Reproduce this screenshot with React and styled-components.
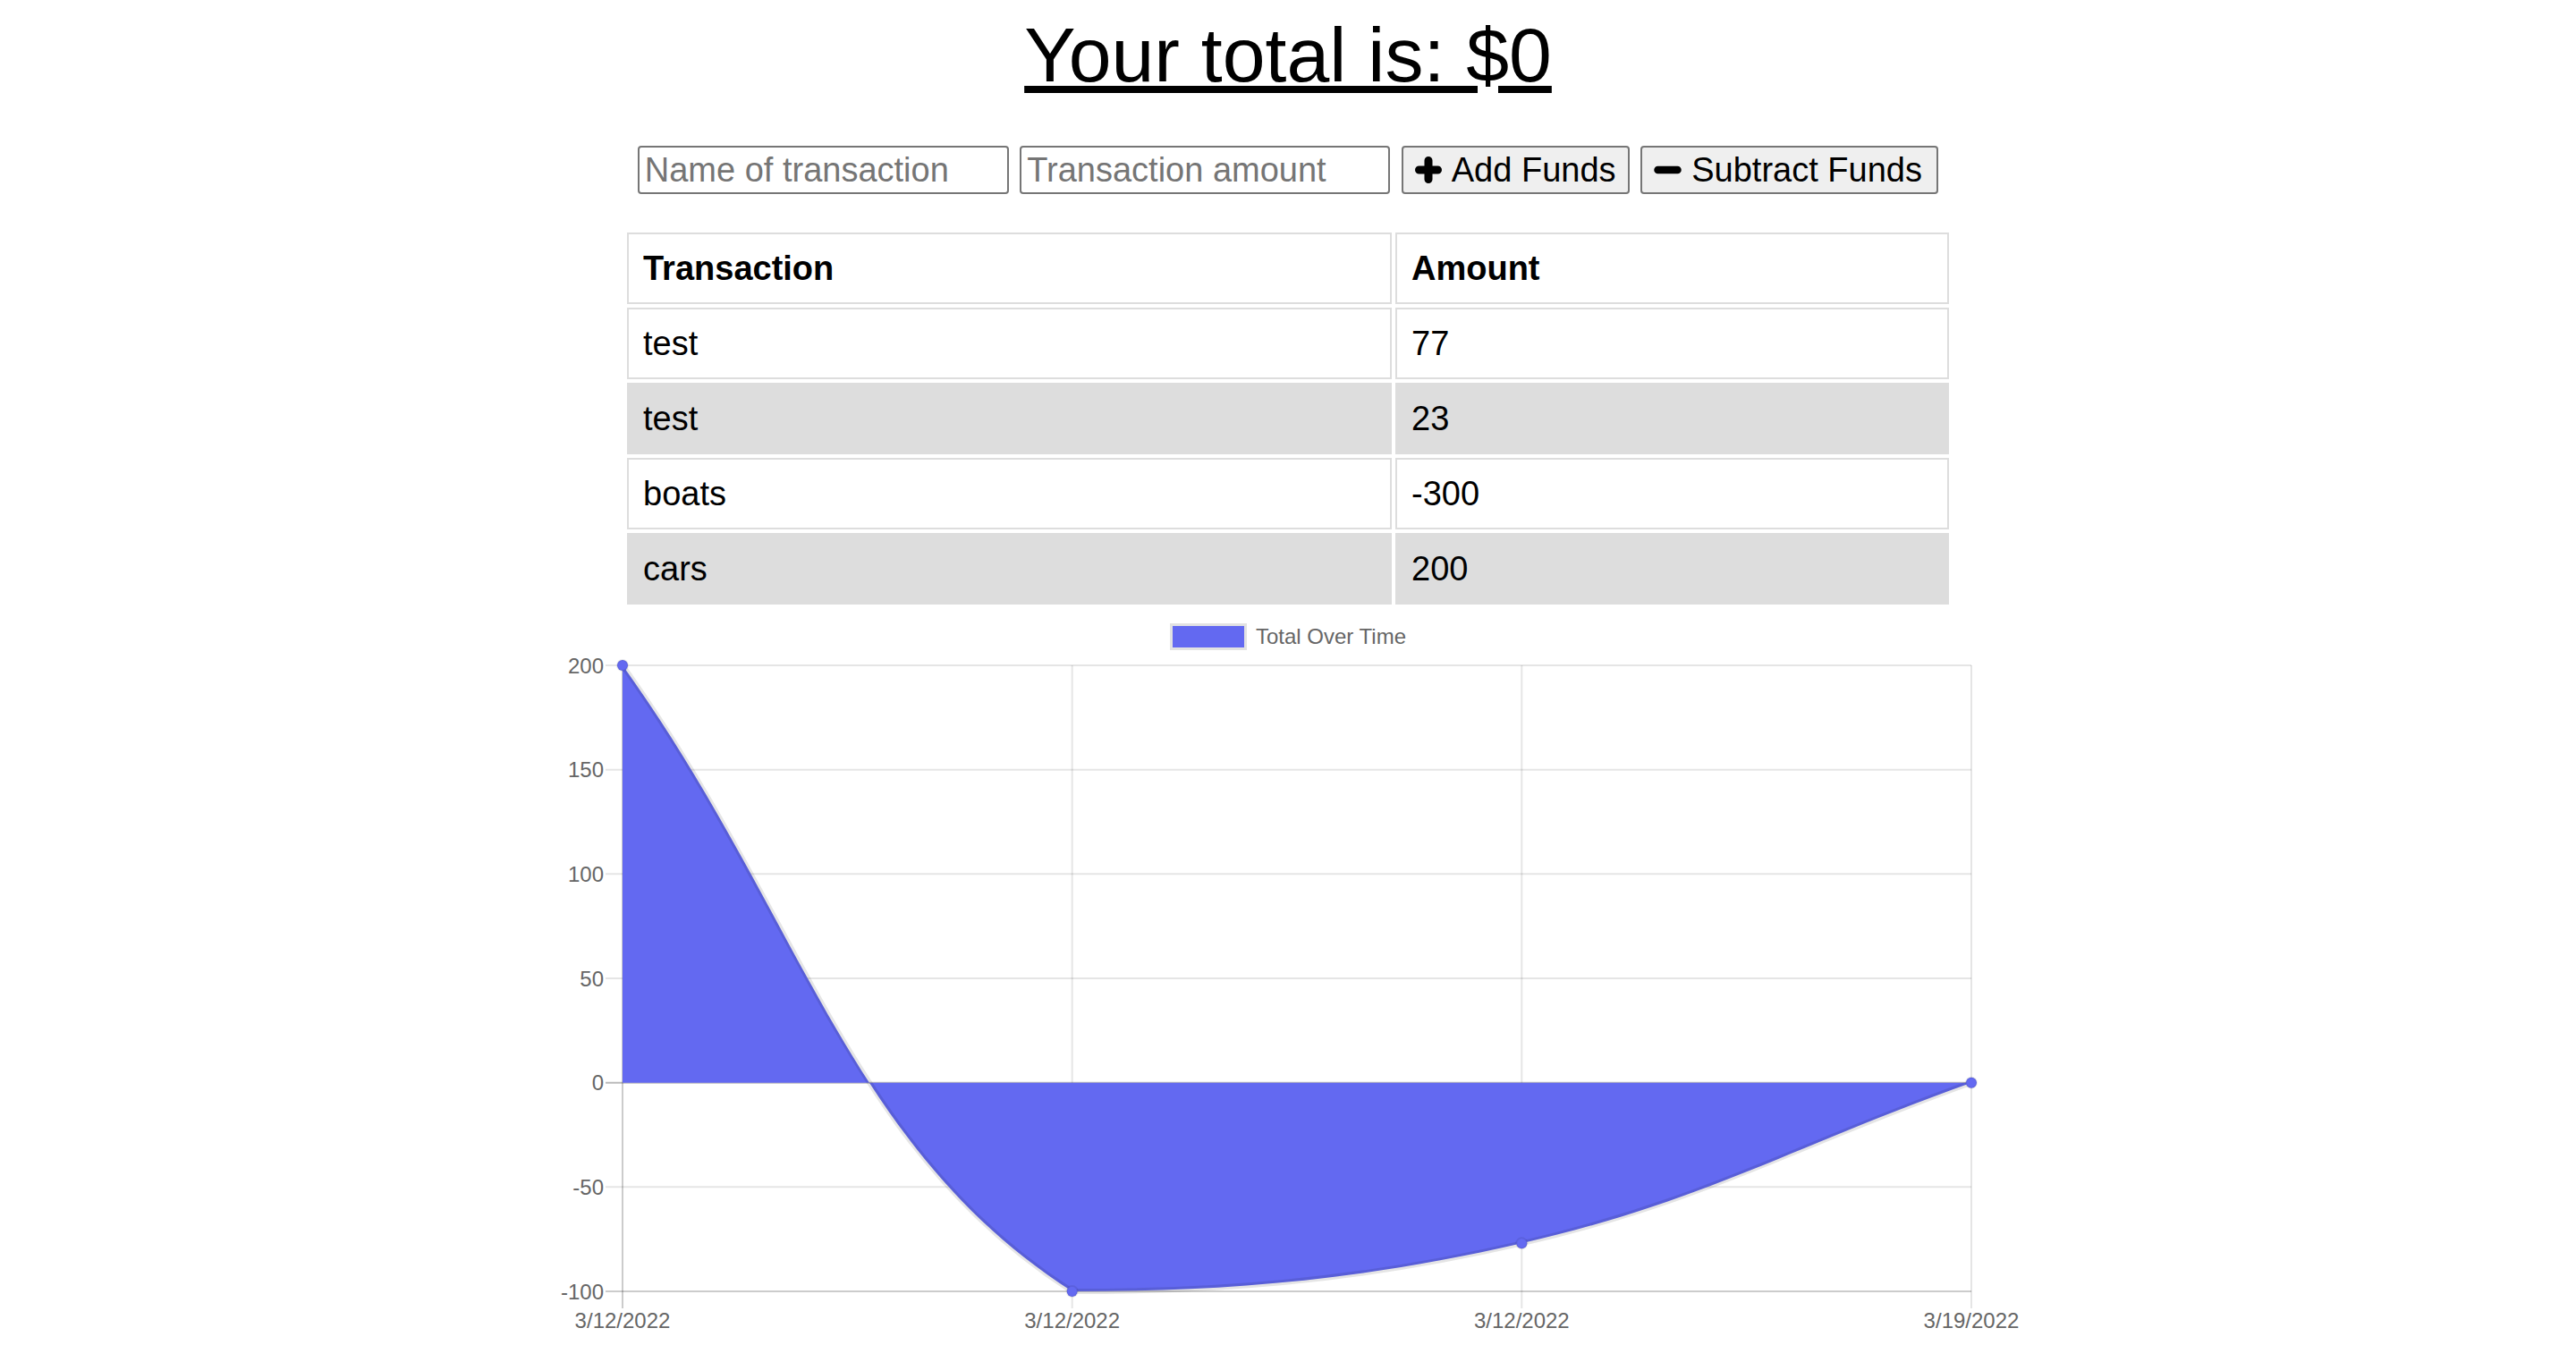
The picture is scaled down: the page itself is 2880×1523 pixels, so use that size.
import React from 'react';
import styled, { createGlobalStyle } from 'styled-components';

//전역 스타일
const GlobalStyle = createGlobalStyle`
  body {
    margin: 0;
    background: #ffffff;
    font-family: "Liberation Sans", Arial, Helvetica, sans-serif;
    color: #000000;
  }
`;

const Page = styled.main`
  display: flex;
  flex-direction: column;
  align-items: center;
`;

const Title = styled.h1`
  margin: 12px 0 0;
  font-size: 86px;
  line-height: 99px;
  font-weight: 400;
  text-decoration: underline;
`;

const Form = styled.div`
  display: flex;
  align-items: center;
  gap: 12.5px;
  margin-top: 52px;
  height: 54px;
`;

const Input = styled.input`
  box-sizing: border-box;
  width: ${({ $width }) => $width}px;
  height: 54px;
  padding: 0 6px;
  border: 2px solid #767676;
  border-radius: 4px;
  background: #ffffff;
  font-family: inherit;
  font-size: 38px;
  color: #000000;
  outline: none;

  &::placeholder {
    color: #757575;
  }
`;

const Button = styled.button`
  box-sizing: border-box;
  display: inline-flex;
  align-items: center;
  gap: ${({ $gap }) => $gap}px;
  width: ${({ $width }) => $width}px;
  height: 54px;
  padding: 0 13px;
  border: 2px solid #767676;
  border-radius: 4px;
  background: #efefef;
  font-family: inherit;
  font-size: 38px;
  color: #000000;
  white-space: nowrap;
  cursor: pointer;
`;

const Table = styled.table`
  margin-top: 39px;
  width: 1486px;
  table-layout: fixed;
  border-collapse: separate;
  border-spacing: 4px;
`;

const Row = styled.tr`
  background: ${({ $striped }) => ($striped ? '#dddddd' : '#ffffff')};
`;

const Cell = styled.td`
  box-sizing: border-box;
  padding: 16px;
  border: 2px solid #dddddd;
  font-size: 38px;
  line-height: 44px;
  text-align: left;
  font-weight: ${({ $head }) => ($head ? 700 : 400)};
  width: ${({ $width }) => ($width ? `${$width}px` : 'auto')};
`;

const ChartBox = styled.section`
  width: 1720px;
  margin-top: 17px;
  display: flex;
  flex-direction: column;
`;

const Legend = styled.div`
  display: flex;
  justify-content: center;
  align-items: center;
  gap: 10px;
  height: 30px;
  font-size: 24px;
  color: #666666;
`;

const Swatch = styled.span`
  box-sizing: border-box;
  width: 86px;
  height: 30px;
  border: 3px solid #e2e2e2;
  background: #6369f1;
`;

const Plot = styled.svg`
  display: block;
  margin-top: 8px;
  overflow: visible;
`;

const GridLine = styled.line`
  stroke: ${({ $tone }) =>
    $tone === 'zero' ? 'rgba(0,0,0,0.27)' : $tone === 'axis' ? 'rgba(0,0,0,0.2)' : 'rgba(0,0,0,0.1)'};
  stroke-width: 2;
`;

const TickLabel = styled.text`
  font-family: "Liberation Sans", Arial, Helvetica, sans-serif;
  font-size: 24px;
  fill: #666666;
`;

const Area = styled.path`
  fill: #6369f1;
  stroke: none;
`;

const Curve = styled.path`
  fill: none;
  stroke: rgba(0, 0, 0, 0.1);
  stroke-width: 6;
`;

const Dot = styled.circle`
  fill: #6369f1;
  stroke: rgba(0, 0, 0, 0.08);
  stroke-width: 2;
`;

// 아이콘
const PlusIcon = () => (
  <svg width="30" height="30" viewBox="0 0 30 30">
    <path d="M15 4.5V25.5M4.5 15H25.5" stroke="#000" strokeWidth="9" strokeLinecap="round" />
  </svg>
);

const MinusIcon = () => (
  <svg width="31" height="30" viewBox="0 0 31 30">
    <path d="M4.5 15H26.5" stroke="#000" strokeWidth="8.5" strokeLinecap="round" />
  </svg>
);

const transactions = [
  { name: 'test', value: '77' },
  { name: 'test', value: '23' },
  { name: 'boats', value: '-300' },
  { name: 'cars', value: '200' },
];

const series = [200, -100, -77, 0];
const labels = ['3/12/2022', '3/12/2022', '3/12/2022', '3/19/2022'];
const ticks = [200, 150, 100, 50, 0, -50, -100];

const AREA = { left: 116, right: 1624, top: 9, bottom: 709 };
const yOf = v => AREA.top + ((200 - v) * (AREA.bottom - AREA.top)) / 300;
const step = (AREA.right - AREA.left) / (series.length - 1);

const clamp = (v, lo, hi) => Math.max(lo, Math.min(hi, v));

// chart.js 스타일 스플라인
function buildPath(points, tension = 0.4) {
  const cps = points.map((cur, i) => {
    const prev = points[i - 1] || cur;
    const next = points[i + 1] || cur;
    const d01 = Math.hypot(cur.x - prev.x, cur.y - prev.y);
    const d12 = Math.hypot(next.x - cur.x, next.y - cur.y);
    const s01 = d01 / (d01 + d12) || 0;
    const s12 = d12 / (d01 + d12) || 0;
    const fa = tension * s01;
    const fb = tension * s12;
    const cap = p => ({
      x: clamp(p.x, AREA.left, AREA.right),
      y: clamp(p.y, AREA.top, AREA.bottom),
    });
    return {
      prev: cap({ x: cur.x - fa * (next.x - prev.x), y: cur.y - fa * (next.y - prev.y) }),
      next: cap({ x: cur.x + fb * (next.x - prev.x), y: cur.y + fb * (next.y - prev.y) }),
    };
  });
  let d = `M${points[0].x} ${points[0].y}`;
  for (let i = 1; i < points.length; i++) {
    const a = cps[i - 1].next;
    const b = cps[i].prev;
    d += ` C${a.x} ${a.y} ${b.x} ${b.y} ${points[i].x} ${points[i].y}`;
  }
  return d;
}

function TotalChart() {
  const points = series.map((v, i) => ({ x: AREA.left + i * step, y: yOf(v) }));
  const line = buildPath(points);
  const zeroY = yOf(0);
  const fill = `${line} L${points[points.length - 1].x} ${zeroY} L${points[0].x} ${zeroY} Z`;

  return (
    <ChartBox>
      <Legend>
        <Swatch />
        Total Over Time
      </Legend>
      <Plot width="1720" height="760" viewBox="0 0 1720 760">
        {ticks.map(t => (
          <GridLine
            key={t}
            x1={97}
            x2={AREA.right}
            y1={yOf(t)}
            y2={yOf(t)}
            $tone={t === 0 ? 'zero' : t === -100 ? 'axis' : 'grid'}
          />
        ))}
        {points.map((p, i) => (
          <GridLine
            key={i}
            x1={p.x}
            x2={p.x}
            y1={AREA.top}
            y2={AREA.bottom + 19}
            $tone={i === 0 ? 'axis' : 'grid'}
          />
        ))}
        {ticks.map(t => (
          <TickLabel key={t} x={95} y={yOf(t) + 8.5} textAnchor="end">
            {t}
          </TickLabel>
        ))}
        {points.map((p, i) => (
          <TickLabel key={i} x={p.x} y={750} textAnchor="middle">
            {labels[i]}
          </TickLabel>
        ))}
        <Area d={fill} />
        <Curve d={line} />
        {points.map((p, i) => (
          <Dot key={i} cx={p.x} cy={p.y} r={6} />
        ))}
      </Plot>
    </ChartBox>
  );
}

function App() {
  return (
    <>
      <GlobalStyle />
      <Page>
        <Title>Your total is: $0</Title>
        <Form>
          <Input $width={415} type="text" placeholder="Name of transaction" />
          <Input $width={414} type="number" placeholder="Transaction amount" />
          <Button $width={255} $gap={11}>
            <PlusIcon />
            Add Funds
          </Button>
          <Button $width={333} $gap={11}>
            <MinusIcon />
            Subtract Funds
          </Button>
        </Form>
        <Table>
          <thead>
            <Row>
              <Cell as="th" $head $width={855}>
                Transaction
              </Cell>
              <Cell as="th" $head>
                Amount
              </Cell>
            </Row>
          </thead>
          <tbody>
            {transactions.map((t, i) => (
              <Row key={i} $striped={i % 2 === 1}>
                <Cell>{t.name}</Cell>
                <Cell>{t.value}</Cell>
              </Row>
            ))}
          </tbody>
        </Table>
        <TotalChart />
      </Page>
    </>
  );
}

export default App;
